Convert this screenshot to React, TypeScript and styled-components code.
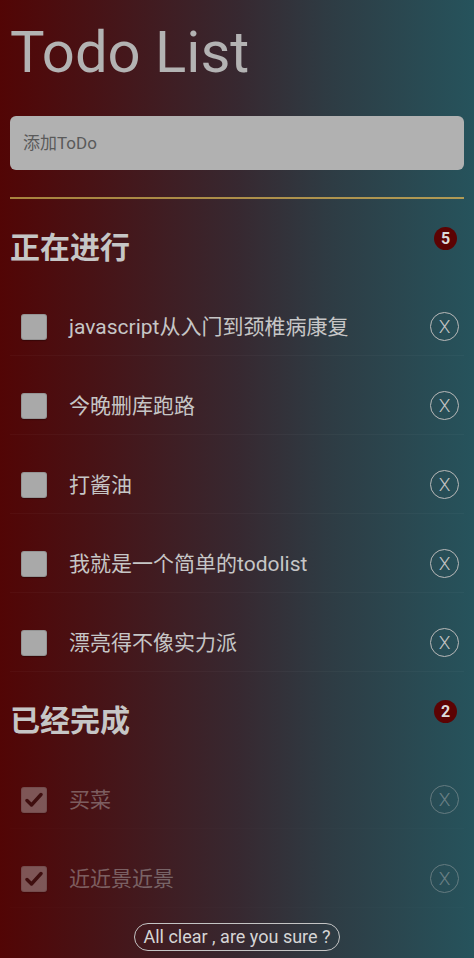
import React from "react";
import styled, { createGlobalStyle } from "styled-components";

const GlobalStyle = createGlobalStyle`
	html, body {
		margin: 0;
		padding: 0;
	}
	body {
		min-height: 100vh;
		background: linear-gradient(to right, #520505 0%, #45161a 25%, #372830 50%, #2e3c44 70%, #26535c 100%);
		font-family: Roboto, "Noto Sans CJK SC", sans-serif;
		color: #c4c4c4;
	}
`;

const Page = styled.div`
	padding: 0 10px;
	box-sizing: border-box;
	width: 474px;
	height: 958px;
	overflow: hidden;
`;

const Title = styled.h1`
	margin: 17px 0 0;
	font-size: 58px;
	line-height: 71px;
	font-weight: 400;
	color: #b3b3b3;
`;

const AddInput = styled.input`
	display: block;
	box-sizing: border-box;
	width: 100%;
	height: 54px;
	margin-top: 28px;
	padding: 0 13px;
	border: none;
	border-radius: 6px;
	background: #b1b1b1;
	font-family: Roboto, "Noto Sans CJK SC", sans-serif;
	font-size: 17px;
	color: #333;
	outline: none;

	&::placeholder {
		color: #5a5a5a;
	}
`;

const Divider = styled.hr`
	margin: 27px 0 0;
	border: none;
	height: 1.5px;
	background: linear-gradient(to right, #a8833e, #b09a55);
`;

const SectionHeader = styled.div`
	display: flex;
	justify-content: space-between;
	align-items: flex-start;
	padding: 34px 7px 14px 0;
`;

const SectionTitle = styled.h2`
	margin: 0;
	font-size: 30px;
	line-height: 30px;
	font-weight: 700;
	color: #c6c6c6;
`;

const Badge = styled.span`
	display: flex;
	align-items: center;
	justify-content: center;
	width: 23px;
	height: 23px;
	margin-top: -6px;
	border-radius: 50%;
	background: #5c0303;
	color: #dcdcdc;
	font-size: 16px;
	font-weight: 700;
`;

const List = styled.ul`
	margin: 0;
	padding: 0;
	list-style: none;
`;

const Row = styled.li<{ $done?: boolean }>`
	display: flex;
	align-items: center;
	height: 30px;
	padding: 35px 5px 13px 11px;
	border-bottom: 1px solid rgba(255, 255, 255, 0.03);
	opacity: ${(p) => (p.$done ? 0.42 : 1)};
`;

const Check = styled.span<{ $checked?: boolean }>`
	display: flex;
	align-items: center;
	justify-content: center;
	flex: none;
	width: 26px;
	height: 26px;
	box-sizing: border-box;
	border-radius: 3px;
	background: ${(p) => (p.$checked ? "#c0c0c0" : "#a9a9a9")};
	box-shadow: inset 0 0 0 1px rgba(0, 0, 0, 0.12), 0 1px 1px rgba(0, 0, 0, 0.3);
`;

const ItemText = styled.span`
	flex: 1;
	margin-left: 22px;
	font-size: 21px;
	line-height: 30px;
	color: #c6c6c6;
	white-space: nowrap;
`;

const DeleteButton = styled.span`
	display: flex;
	align-items: center;
	justify-content: center;
	flex: none;
	width: 29px;
	height: 29px;
	box-sizing: border-box;
	border: 1.5px solid #b9b9b9;
	border-radius: 50%;
	color: #c4c4c4;
	font-size: 19px;
	font-weight: 300;
	line-height: 1;
`;

const Footer = styled.div`
	display: flex;
	justify-content: center;
	padding-top: 15px;
`;

const ClearButton = styled.button`
	height: 28px;
	padding: 0 8px;
	border: 1.5px solid #c4c4c4;
	border-radius: 14px;
	background: transparent;
	font-family: Roboto, sans-serif;
	font-size: 18px;
	line-height: 24px;
	color: #d6d6d6;
`;

const CheckMark = () => (
	<svg width="18" height="16" viewBox="0 0 18 16">
		<path d="M2 8.5 L6.5 13 L16 2.5" fill="none" stroke="#2b1414" strokeWidth="3.4" strokeLinecap="round" strokeLinejoin="round" />
	</svg>
);

const doing = [
	"javascript从入门到颈椎病康复",
	"今晚删库跑路",
	"打酱油",
	"我就是一个简单的todolist",
	"漂亮得不像实力派",
];

const done = ["买菜", "近近景近景"];

export default function App() {
	return (
		<Page>
			<GlobalStyle />
			<Title>Todo List</Title>
			<AddInput placeholder="添加ToDo" />
			<Divider />

			<SectionHeader>
				<SectionTitle>正在进行</SectionTitle>
				<Badge>{doing.length}</Badge>
			</SectionHeader>
			<List>
				{doing.map((item) => (
					<Row key={item}>
						<Check />
						<ItemText>{item}</ItemText>
						<DeleteButton>X</DeleteButton>
					</Row>
				))}
			</List>

			<SectionHeader>
				<SectionTitle>已经完成</SectionTitle>
				<Badge>{done.length}</Badge>
			</SectionHeader>
			<List>
				{done.map((item) => (
					<Row key={item} $done>
						<Check $checked>
							<CheckMark />
						</Check>
						<ItemText>{item}</ItemText>
						<DeleteButton>X</DeleteButton>
					</Row>
				))}
			</List>

			<Footer>
				<ClearButton>All clear , are you sure ?</ClearButton>
			</Footer>
		</Page>
	);
}
